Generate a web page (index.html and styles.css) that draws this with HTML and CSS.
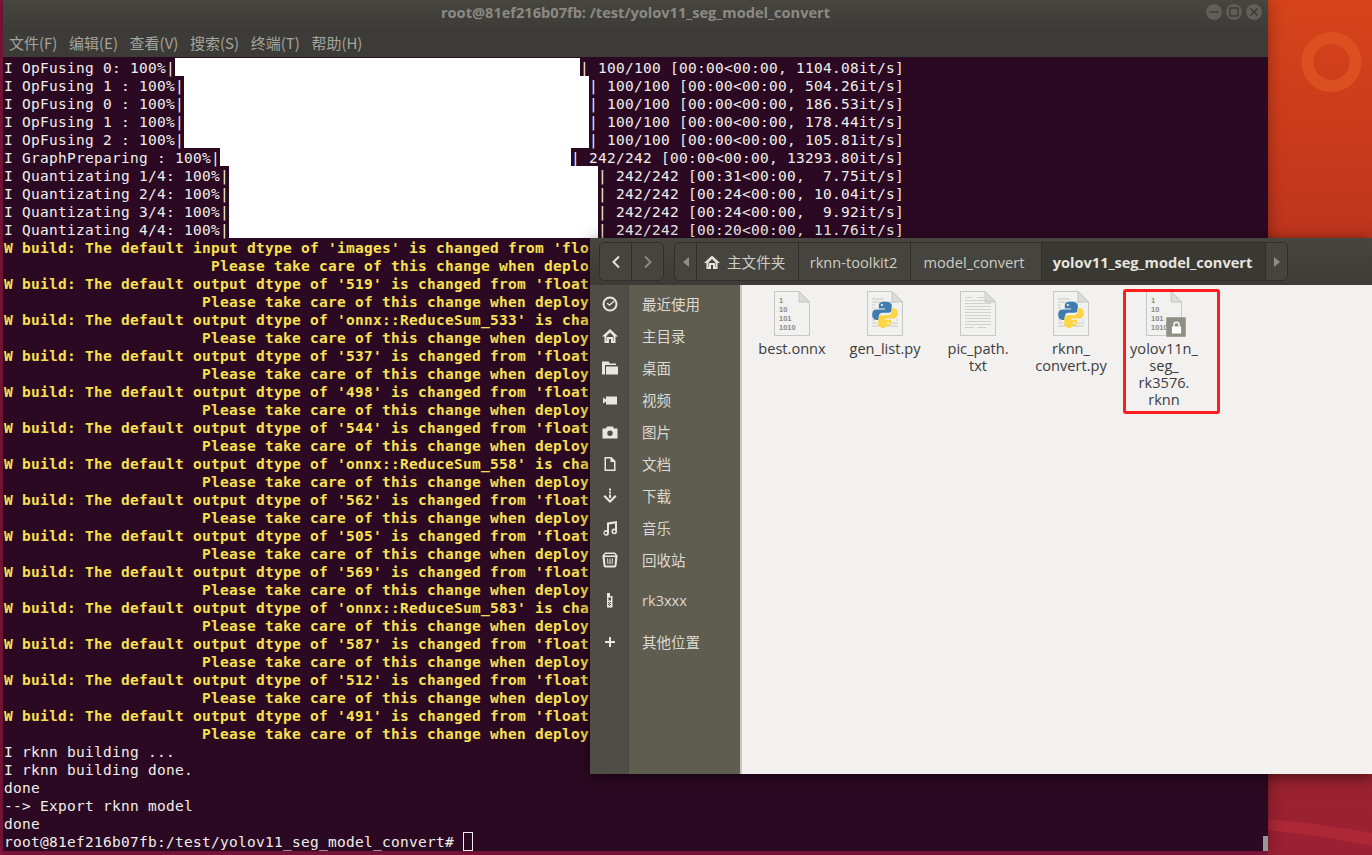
FILE: index.html
```html
<!DOCTYPE html>
<html lang="en">

<head>
    <meta charset="utf-8">
    <meta name="viewport" content="width=device-width, initial-scale=1">
    <title>Terminal and file manager</title>
    <link rel="stylesheet" href="styles.css">
</head>

<body>
    <svg class="wallpaper" viewBox="0 0 1372 855" aria-hidden="true">
        <circle cx="1331.5" cy="62" r="24" fill="none" stroke="#dc4f20" stroke-width="12" />
        <path d="M1268 819 Q1325 824 1372 833 V846 Q1325 836 1268 830 Z" fill="#ad2836" />
    </svg>

    <section id="terminal">
        <header class="term-head">
            <div class="term-title">root@81ef216b07fb: /test/yolov11_seg_model_convert</div>
            <div class="win-buttons">
                <span class="win-btn"><svg viewBox="0 0 16 16"><path d="M3.5 8h9" /></svg></span>
                <span class="win-btn"><svg viewBox="0 0 16 16"><rect x="4" y="4" width="8" height="8" /></svg></span>
                <span class="win-btn"><svg viewBox="0 0 16 16"><path d="M4.5 4.5l7 7M11.5 4.5l-7 7" /></svg></span>
            </div>
            <nav class="term-menu">
                <span>文件(F)</span><span>编辑(E)</span><span>查看(V)</span><span>搜索(S)</span><span>终端(T)</span><span>帮助(H)</span>
            </nav>
        </header>
        <div class="screen">
            <div class="line">I OpFusing 0: 100%|<span class="bar bar-45"></span>| 100/100 [00:00&lt;00:00, 1104.08it/s]</div>
            <div class="line">I OpFusing 1 : 100%|<span class="bar bar-45"></span>| 100/100 [00:00&lt;00:00, 504.26it/s]</div>
            <div class="line">I OpFusing 0 : 100%|<span class="bar bar-45"></span>| 100/100 [00:00&lt;00:00, 186.53it/s]</div>
            <div class="line">I OpFusing 1 : 100%|<span class="bar bar-45"></span>| 100/100 [00:00&lt;00:00, 178.44it/s]</div>
            <div class="line">I OpFusing 2 : 100%|<span class="bar bar-45"></span>| 100/100 [00:00&lt;00:00, 105.81it/s]</div>
            <div class="line">I GraphPreparing : 100%|<span class="bar bar-39"></span>| 242/242 [00:00&lt;00:00, 13293.80it/s]</div>
            <div class="line">I Quantizating 1/4: 100%|<span class="bar bar-41"></span>| 242/242 [00:31&lt;00:00,  7.75it/s]</div>
            <div class="line">I Quantizating 2/4: 100%|<span class="bar bar-41"></span>| 242/242 [00:24&lt;00:00, 10.04it/s]</div>
            <div class="line">I Quantizating 3/4: 100%|<span class="bar bar-41"></span>| 242/242 [00:24&lt;00:00,  9.92it/s]</div>
            <div class="line">I Quantizating 4/4: 100%|<span class="bar bar-41"></span>| 242/242 [00:20&lt;00:00, 11.76it/s]</div>
            <div class="line warn">W build: The default input dtype of 'images' is changed from 'flo</div>
            <div class="line warn">                       Please take care of this change when deplo</div>
            <div class="line warn">W build: The default output dtype of '519' is changed from 'float</div>
            <div class="line warn">                      Please take care of this change when deploy</div>
            <div class="line warn">W build: The default output dtype of 'onnx::ReduceSum_533' is cha</div>
            <div class="line warn">                      Please take care of this change when deploy</div>
            <div class="line warn">W build: The default output dtype of '537' is changed from 'float</div>
            <div class="line warn">                      Please take care of this change when deploy</div>
            <div class="line warn">W build: The default output dtype of '498' is changed from 'float</div>
            <div class="line warn">                      Please take care of this change when deploy</div>
            <div class="line warn">W build: The default output dtype of '544' is changed from 'float</div>
            <div class="line warn">                      Please take care of this change when deploy</div>
            <div class="line warn">W build: The default output dtype of 'onnx::ReduceSum_558' is cha</div>
            <div class="line warn">                      Please take care of this change when deploy</div>
            <div class="line warn">W build: The default output dtype of '562' is changed from 'float</div>
            <div class="line warn">                      Please take care of this change when deploy</div>
            <div class="line warn">W build: The default output dtype of '505' is changed from 'float</div>
            <div class="line warn">                      Please take care of this change when deploy</div>
            <div class="line warn">W build: The default output dtype of '569' is changed from 'float</div>
            <div class="line warn">                      Please take care of this change when deploy</div>
            <div class="line warn">W build: The default output dtype of 'onnx::ReduceSum_583' is cha</div>
            <div class="line warn">                      Please take care of this change when deploy</div>
            <div class="line warn">W build: The default output dtype of '587' is changed from 'float</div>
            <div class="line warn">                      Please take care of this change when deploy</div>
            <div class="line warn">W build: The default output dtype of '512' is changed from 'float</div>
            <div class="line warn">                      Please take care of this change when deploy</div>
            <div class="line warn">W build: The default output dtype of '491' is changed from 'float</div>
            <div class="line warn">                      Please take care of this change when deploy</div>
            <div class="line">I rknn building ...</div>
            <div class="line">I rknn building done.</div>
            <div class="line">done</div>
            <div class="line">--&gt; Export rknn model</div>
            <div class="line">done</div>
            <div class="line">root@81ef216b07fb:/test/yolov11_seg_model_convert# <span class="cursor"></span></div>
        </div>
        <div class="term-thumb"></div>
    </section>

    <svg class="defs" aria-hidden="true">
        <defs>
            <symbol id="page" viewBox="0 0 36 45">
                <path d="M.5.5H25L35.5 11V44.5H.5Z" fill="#f1f1ef" stroke="#c6c6c2" />
                <path d="M25 .5V11H35.5Z" fill="#dcdcd8" stroke="#c6c6c2" />
            </symbol>
            <symbol id="binary" viewBox="0 0 36 45">
                <use href="#page" />
                <g class="bin-text">
                    <text x="5" y="12">1</text>
                    <text x="5" y="21">10</text>
                    <text x="5" y="30">101</text>
                    <text x="5" y="39">1010</text>
                </g>
            </symbol>
            <symbol id="lines" viewBox="0 0 14 33">
                <path d="M0 .5h7M0 3.5h14M0 6.5h14M0 9.5h14M0 12.5h14M0 15.5h14M0 18.5h14M0 21.5h14M0 24.5h14M0 27.5h14M0 30.5h9" stroke="#d0d0cc" />
            </symbol>
            <symbol id="python" viewBox="0 0 36 45">
                <use href="#page" />
                <path d="M5 8h12M5 11h24M5 14h3M5 17h3M5 20h3M5 23h3M5 26h3M5 29h3M29 29h2M5 32h5M25 32h6M5 35h26" stroke="#c9c9c5" />
                <g transform="translate(4 9) scale(1.17)">
                    <path d="M12 1.5c-5 0-5.3 2-5.3 3.2v2.5H12v1H4.6c-2 0-3.6 1.6-3.6 4.4s1.5 4.4 3.6 4.4h2.1v-2.8c0-1.8 1.5-3.2 3.2-3.2h5c1.6 0 2.9-1.3 2.9-2.9V4.7c0-1.7-1.5-3.2-5.8-3.2z" fill="#3f7db0" />
                    <circle cx="9.3" cy="4.3" r=".9" fill="#fff" />
                    <path d="M12 22.5c5 0 5.3-2 5.3-3.2v-2.5H12v-1h7.4c2 0 3.6-1.6 3.6-4.4s-1.5-4.4-3.6-4.4h-2.1v2.8c0 1.8-1.5 3.2-3.2 3.2h-5c-1.6 0-2.9 1.3-2.9 2.9v4.9c0 1.7 1.5 3.2 5.8 3.2z" fill="#fdd445" />
                    <circle cx="14.7" cy="19.7" r=".9" fill="#fff" />
                </g>
            </symbol>
        </defs>
    </svg>

    <section id="files">
        <header class="fm-toolbar">
            <div class="nav-group">
                <span class="nav-btn"><svg viewBox="0 0 12 16"><path d="M9 2.5L3.5 8 9 13.5" /></svg></span>
                <span class="nav-btn is-off"><svg viewBox="0 0 12 16"><path d="M3 2.5L8.5 8 3 13.5" /></svg></span>
            </div>
            <div class="path-bar">
                <span class="path-arrow"><i class="tri tri-left"></i></span>
                <span class="crumb crumb-home">
                    <svg class="crumb-icon" viewBox="0 0 16 16"><path d="M8 1.5L0 9h2.5v6H7v-4h2v4h4.500V9H16zM4.500 8.500L8 5l3.500 3.500V13h-.500V9h-6v4h-.500z" /></svg>
                    主文件夹
                </span>
                <span class="crumb crumb-toolkit">rknn-toolkit2</span>
                <span class="crumb crumb-model">model_convert</span>
                <span class="crumb crumb-active">yolov11_seg_model_convert</span>
                <span class="path-arrow"><i class="tri tri-right"></i></span>
            </div>
        </header>
        <div class="fm-body">
            <aside class="places">
                <div class="place">
                    <svg viewBox="0 0 16 16"><path d="M8 .5a7.500 7.500 0 1 0 0 15 7.500 7.500 0 0 0 0-15zm0 2a5.500 5.500 0 1 1 0 11 5.500 5.500 0 0 1 0-11zM11.800 4.500L7.500 8.300 5.500 6.800 4.700 7.700 7.600 10l5-4.500z" /></svg>
                    <span>最近使用</span>
                </div>
                <div class="place">
                    <svg viewBox="0 0 16 16"><path d="M8 1L0 8.500h2.500V15H7v-4h2v4h4.500V8.500H16zM4.500 8L8 4.500 11.500 8v5H11V9H5v4h-.500z" /></svg>
                    <span>主目录</span>
                </div>
                <div class="place">
                    <svg viewBox="0 0 16 16"><path d="M0 1.500h6.500L8 3.500h6V5H3v9.500H0zM4 6.500h12v8H4z" /></svg>
                    <span>桌面</span>
                </div>
                <div class="place">
                    <svg viewBox="0 0 16 16"><path d="M1 5.500l3 2v-3h11v8H4v-3l-3 2z" /></svg>
                    <span>视频</span>
                </div>
                <div class="place">
                    <svg viewBox="0 0 16 16"><path fill-rule="evenodd" d="M5 2.500h6l1 2h3.500v10H.5v-10H4zM8 6.500a2.700 2.700 0 1 0 0 5.400 2.700 2.700 0 0 0 0-5.400z" /></svg>
                    <span>图片</span>
                </div>
                <div class="place">
                    <svg viewBox="0 0 16 16"><path fill-rule="evenodd" d="M2.500 1h7L13.500 5v10h-11zM4 2.500v11h8V6H8.500V2.500z" /></svg>
                    <span>文档</span>
                </div>
                <div class="place">
                    <svg viewBox="0 0 16 16"><path d="M7 .5h2v2H7zM7 3.500h2v2H7zM7 6.500h2v3.500H7zM1.500 8.500L3 7l5 5 5-5 1.500 1.500L8 15z" /></svg>
                    <span>下载</span>
                </div>
                <div class="place">
                    <svg viewBox="0 0 16 16"><path fill-rule="evenodd" d="M5 2.500L15 1v10.500a2.800 2.800 0 1 1-2-2.700V3.500L7 4.500v8.500a2.800 2.800 0 1 1-2-2.700zM3.800 11.800a1.200 1.200 0 1 0 0 2.400 1.200 1.200 0 0 0 0-2.400zM12.200 10.300a1.200 1.200 0 1 0 0 2.400 1.200 1.200 0 0 0 0-2.400z" /></svg>
                    <span>音乐</span>
                </div>
                <div class="place">
                    <svg viewBox="0 0 16 16"><path fill-rule="evenodd" d="M3 .5h10l2.500 3v1l-1 9a2 2 0 0 1-2 2h-9a2 2 0 0 1-2-2l-1-9v-1zM3.500 2L2.500 3.500h11L12.500 2zM2.700 5l.8 8.500h9l.8-8.500zM5 6.500h1l.5 5.500h-1zM7.500 6.500h1V12h-1zM10 6.500h1l-.5 5.500h-1z" /></svg>
                    <span>回收站</span>
                </div>
                <div class="place place-drive">
                    <svg viewBox="0 0 16 16"><path fill-rule="evenodd" d="M5 1h3v3h2.500v11.500H5zM6.500 5.500v3h2.500v-3zM6 10h1v1H6zM8 10h1v1H8zM7 11h1v1H7zM6 12h1v1H6zM8 12h1v1H8zM7 13h1v1H7z" /></svg>
                    <span>rk3xxx</span>
                </div>
                <div class="place place-other">
                    <svg viewBox="0 0 16 16"><path d="M7 3h2v4h4v2H9v4H7V9H3V7h4z" /></svg>
                    <span>其他位置</span>
                </div>
            </aside>
            <main class="file-grid">
                <div class="file">
                    <svg class="file-icon"><use href="#binary" /></svg>
                    <span>best.onnx</span>
                </div>
                <div class="file">
                    <svg class="file-icon"><use href="#python" /></svg>
                    <span>gen_list.py</span>
                </div>
                <div class="file">
                    <svg class="file-icon" viewBox="0 0 36 45">
                        <use href="#page" width="36" height="45" />
                        <use href="#lines" x="5" y="6" width="14" height="33" />
                        <use href="#lines" x="17" y="6" width="14" height="33" />
                    </svg>
                    <span>pic_path.<br>txt</span>
                </div>
                <div class="file">
                    <svg class="file-icon"><use href="#python" /></svg>
                    <span>rknn_<br>convert.py</span>
                </div>
                <div class="file file-marked">
                    <div class="icon-wrap">
                        <svg class="file-icon"><use href="#binary" /></svg>
                        <span class="lock">
                            <svg viewBox="0 0 12 14"><path fill-rule="evenodd" d="M2.500 6V4a3.500 3.500 0 0 1 7 0v2h1.500v7.500H1V6zM4 6h4V4a2 2 0 0 0-4 0z" /></svg>
                        </span>
                    </div>
                    <span>yolov11n_<br>seg_<br>rk3576.<br>rknn</span>
                </div>
            </main>
        </div>
    </section>
</body>

</html>
```

FILE: styles.css
```css
html,
body {
    width: 1372px;
    height: 855px;
    margin: 0;
    padding: 0;
    overflow: hidden;
}

body {
    position: relative;
    background:
        linear-gradient(to right, #86163f 0, #86163f 1268px, transparent 1268px),
        linear-gradient(to bottom, #d6441a 0, #cb3b1b 130px, #b6301f 300px, #9c2230 790px, #9a2033 855px);
}

.wallpaper {
    position: absolute;
    top: 0;
    left: 0;
    width: 1372px;
    height: 855px;
}

.defs {
    position: absolute;
    width: 0;
    height: 0;
}

/* terminal window */

#terminal {
    position: absolute;
    top: 0;
    left: 3px;
    width: 1265px;
    height: 851px;
    display: flex;
    flex-direction: column;
    background: #2c0922;
    box-shadow: 0 0 14px rgba(0, 0, 0, 0.35);
    overflow: hidden;
}

.term-head {
    position: relative;
    flex: none;
    height: 57px;
    background: linear-gradient(#46453f, #3c3b37 30px);
    font-family: "Noto Sans CJK SC", sans-serif;
}

.term-title {
    height: 25px;
    line-height: 25px;
    text-align: center;
    font-family: "Open Sans", sans-serif;
    font-size: 14.6px;
    font-weight: 700;
    color: #8c8a83;
}

.win-buttons {
    position: absolute;
    top: 4px;
    right: 6px;
    display: flex;
    gap: 4px;
}

.win-btn {
    width: 16px;
    height: 16px;
    border-radius: 50%;
    background: #5f5e59;
}

.win-btn svg {
    display: block;
    width: 16px;
    height: 16px;
    fill: none;
    stroke: #36352f;
    stroke-width: 1.2;
}

.term-menu {
    display: flex;
    gap: 11.6px;
    padding: 6px 0 0 6px;
    font-size: 15px;
    line-height: 24px;
    color: #a5a39b;
}

.screen {
    padding: 1px 0 0 1px;
    font-family: "DejaVu Sans Mono", monospace;
    font-size: 14.5px;
    letter-spacing: 0.27px;
    color: #eeeeec;
}

.line {
    height: 18px;
    line-height: 20px;
    white-space: pre;
}

.warn {
    color: #f7e152;
    font-weight: 700;
}

.bar {
    display: inline-block;
    height: 18px;
    vertical-align: top;
    background: #fff;
}

.bar-45 {
    width: 405px;
}

.bar-39 {
    width: 351px;
}

.bar-41 {
    width: 369px;
}

.cursor {
    display: inline-block;
    box-sizing: border-box;
    width: 10px;
    height: 19px;
    vertical-align: top;
    border: 1px solid #eeeeec;
}

.term-thumb {
    position: absolute;
    right: 0;
    bottom: 0;
    width: 5px;
    height: 15px;
    background: #9a979a;
}

/* file manager window */

#files {
    position: absolute;
    top: 238px;
    left: 590px;
    width: 782px;
    height: 536px;
    display: flex;
    flex-direction: column;
    box-shadow: 0 3px 14px rgba(0, 0, 0, 0.55);
    font-family: "Open Sans", "Noto Sans CJK SC", sans-serif;
}

.fm-toolbar {
    flex: none;
    box-sizing: border-box;
    height: 47px;
    padding: 4px 0 0 9px;
    display: flex;
    gap: 10px;
    background: linear-gradient(#46453f, #3c3b36);
}

.nav-group,
.path-bar {
    display: flex;
    height: 39px;
    box-sizing: border-box;
    border: 1px solid #302f2b;
    border-radius: 5px;
    background: #45443e;
}

.nav-btn {
    width: 31px;
    display: flex;
    justify-content: center;
    align-items: center;
}

.nav-btn:first-child {
    border-right: 1px solid #302f2b;
}

.nav-btn svg {
    width: 12px;
    height: 16px;
    fill: none;
    stroke: #e4e2dc;
    stroke-width: 2;
}

.nav-btn.is-off svg {
    stroke: #8a8880;
}

.path-bar {
    width: 614px;
}

.path-arrow {
    width: 21px;
    display: flex;
    justify-content: center;
    align-items: center;
    flex: none;
}

.tri {
    width: 0;
    height: 0;
    border-top: 5px solid transparent;
    border-bottom: 5px solid transparent;
}

.tri-left {
    border-right: 6px solid #8f8d85;
}

.tri-right {
    border-left: 6px solid #8f8d85;
}

.crumb {
    display: flex;
    align-items: center;
    justify-content: center;
    flex: none;
    box-sizing: border-box;
    border-left: 1px solid #302f2b;
    font-size: 14.6px;
    color: #cfcdc5;
}

.crumb-icon {
    width: 16px;
    height: 16px;
    margin-right: 7px;
    fill: #e4e2dc;
}

.crumb-home {
    width: 102px;
    justify-content: flex-start;
    padding-left: 7px;
}

.crumb-toolkit {
    width: 112px;
    padding-right: 2px;
}

.crumb-model {
    width: 131px;
    padding-right: 4px;
}

.crumb-active {
    width: 225px;
    padding-right: 2px;
    background: #393833;
    border-right: 1px solid #302f2b;
    font-weight: 700;
    color: #e6e4dd;
}

.fm-body {
    flex: 1;
    display: flex;
    min-height: 0;
}

.places {
    flex: none;
    width: 150px;
    padding-top: 3px;
    background: linear-gradient(to right, #4f4e46 38px, #47463f 38px, #47463f 39px, #5f5c50 39px);
    border-right: 2px solid #c9c7c3;
    font-size: 14.5px;
    color: #dcdad2;
}

.place {
    height: 32px;
    display: flex;
    align-items: center;
}

.place span {
    margin-bottom: 2px;
}

.place svg {
    flex: none;
    width: 16px;
    height: 16px;
    margin: 0 24px 0 12px;
    fill: #e8e6e0;
}

.place-drive {
    margin-top: 8px;
    font-size: 14.6px;
}

.place-drive span {
    margin-bottom: 0;
}

.place-other {
    margin-top: 10px;
}

.file-grid {
    flex: 1;
    display: grid;
    grid-template-columns: repeat(5, 92px);
    column-gap: 1px;
    align-items: start;
    padding: 6px 0 0 4px;
    background: #f2f1ef;
    font-size: 14.6px;
    line-height: 17px;
    color: #3c3c3c;
}

.file {
    position: relative;
    display: flex;
    flex-direction: column;
    align-items: center;
    gap: 4px;
    text-align: center;
}

.file-icon {
    display: block;
    width: 36px;
    height: 45px;
}

.bin-text {
    font-family: "Liberation Sans", sans-serif;
    font-size: 7.5px;
    font-weight: 700;
    fill: #8c8c88;
}

.file-marked::after {
    content: "";
    position: absolute;
    top: -2px;
    left: 5px;
    width: 91px;
    height: 119px;
    border: 3px solid #ff1c1c;
    border-radius: 3px;
}

.icon-wrap {
    position: relative;
}

.lock {
    position: absolute;
    top: 26px;
    left: 20px;
    width: 20px;
    height: 20px;
    display: flex;
    align-items: center;
    justify-content: center;
    border-radius: 2px;
    background: #8f8f85;
    box-shadow: inset 0 0 0 1px #a5a59c;
}

.lock svg {
    width: 11px;
    height: 13px;
    fill: #fff;
}
```
